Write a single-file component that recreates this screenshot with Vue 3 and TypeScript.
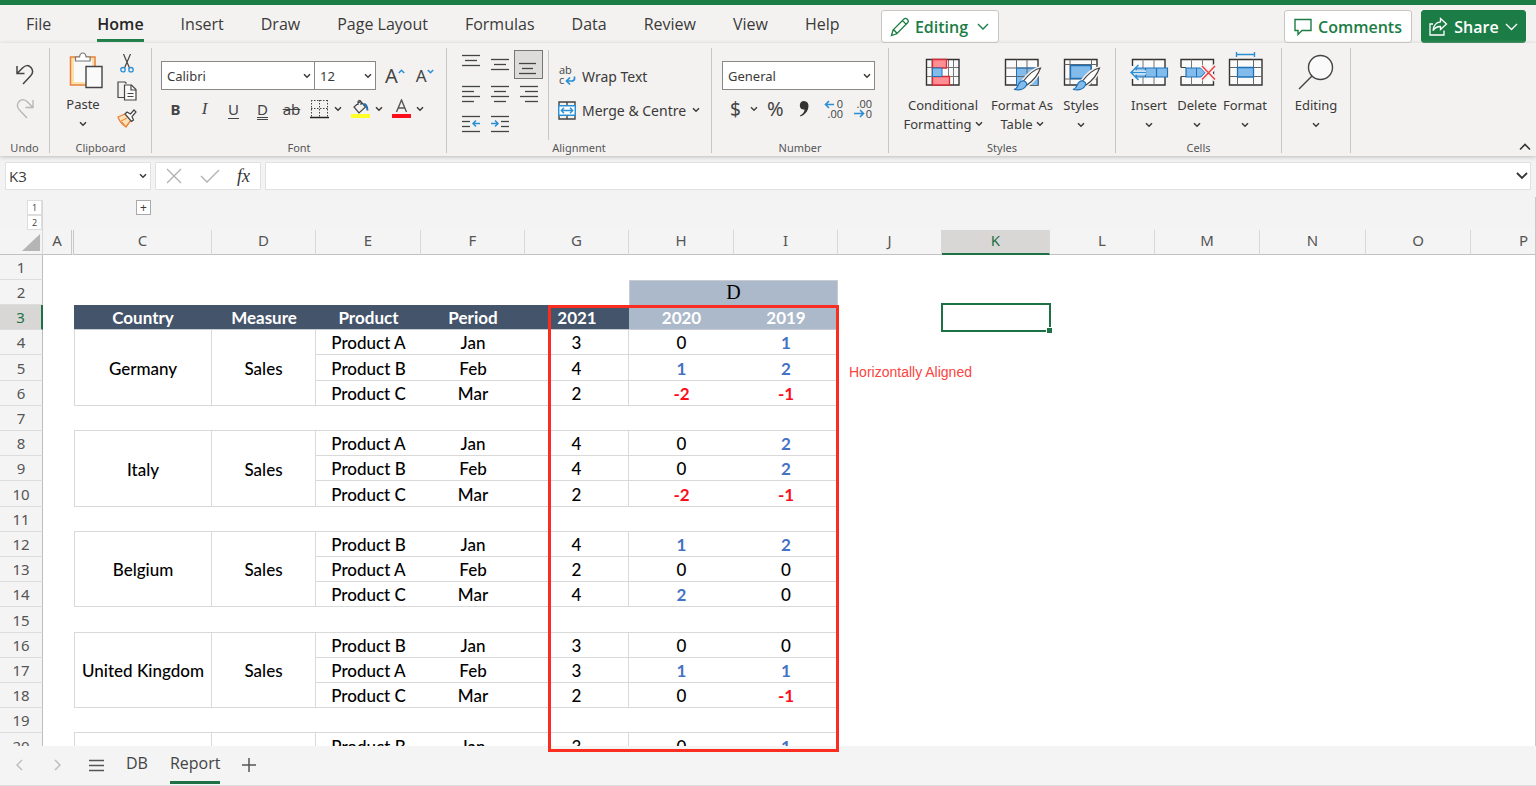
<script setup lang="ts">
import { h, ref } from 'vue'

type Line = [number, number, number]
interface AlignIcon { name: string; lines: Line[]; arrow?: string; active?: boolean }
interface DataRow { product: string; period: string; values: [number, number, number] }
interface Block { country: string; rows: DataRow[] }
interface SheetRow { n: number; kind: 'blank' | 'title' | 'header' | 'data' | 'gap'; first?: boolean; span?: number; country?: string; data?: DataRow }

const Chevron = () =>
  h('svg', { class: 'chev', width: 8, height: 6, viewBox: '0 0 8 6', 'aria-hidden': 'true' }, [
    h('path', { d: 'M1 1.2l3 3 3-3', fill: 'none', stroke: 'currentColor', 'stroke-width': 1.5 }),
  ])

const tabs = ['File', 'Home', 'Insert', 'Draw', 'Page Layout', 'Formulas', 'Data', 'Review', 'View', 'Help']
const activeTab = ref('Home')
const cellName = ref('K3')
const formula = ref('')

const alignIcons: AlignIcon[] = [
  { name: 'Top align', lines: [[6, 24, 5], [9, 21, 10], [6, 24, 15]] },
  { name: 'Middle align', lines: [[6, 24, 9], [9, 21, 14], [6, 24, 19]] },
  { name: 'Bottom align', lines: [[5, 22, 13], [8, 19, 18], [5, 22, 23]], active: true },
  { name: 'Align left', lines: [[6, 24, 7], [6, 18, 12], [6, 24, 17], [6, 18, 22]] },
  { name: 'Centre', lines: [[6, 24, 7], [9, 21, 12], [6, 24, 17], [9, 21, 22]] },
  { name: 'Align right', lines: [[6, 24, 7], [11, 24, 12], [6, 24, 17], [11, 24, 22]] },
  { name: 'Decrease indent', lines: [[6, 24, 7], [6, 14, 12], [6, 14, 17], [6, 24, 22]], arrow: 'M24 14.5h-6.5M20 11.5l-3 3 3 3' },
  { name: 'Increase indent', lines: [[6, 24, 7], [16, 24, 12], [16, 24, 17], [6, 24, 22]], arrow: 'M6 14.5h6.5M10 11.5l3 3-3 3' },
]

const columns = [
  { id: 'A', width: 31 }, { id: 'C', width: 138 }, { id: 'D', width: 104 }, { id: 'E', width: 105 },
  { id: 'F', width: 104 }, { id: 'G', width: 104 }, { id: 'H', width: 105 }, { id: 'I', width: 104 },
  { id: 'J', width: 104 }, { id: 'K', width: 108 }, { id: 'L', width: 105 }, { id: 'M', width: 105 },
  { id: 'N', width: 106 }, { id: 'O', width: 105 }, { id: 'P', width: 106 },
]
const gutter = 43
const tableWidth = gutter + columns.reduce((sum, c) => sum + c.width, 0)
const trailing = ['J', 'K', 'L', 'M', 'N', 'O', 'P']

const row = (product: string, period: string, a: number, b: number, c: number): DataRow => ({ product, period, values: [a, b, c] })
const blocks: Block[] = [
  { country: 'Germany', rows: [row('Product A', 'Jan', 3, 0, 1), row('Product B', 'Feb', 4, 1, 2), row('Product C', 'Mar', 2, -2, -1)] },
  { country: 'Italy', rows: [row('Product A', 'Jan', 4, 0, 2), row('Product B', 'Feb', 4, 0, 2), row('Product C', 'Mar', 2, -2, -1)] },
  { country: 'Belgium', rows: [row('Product B', 'Jan', 4, 1, 2), row('Product A', 'Feb', 2, 0, 0), row('Product C', 'Mar', 4, 2, 0)] },
  { country: 'United Kingdom', rows: [row('Product B', 'Jan', 3, 0, 0), row('Product A', 'Feb', 3, 1, 1), row('Product C', 'Mar', 2, 0, -1)] },
  { country: '', rows: [row('Product B', 'Jan', 3, 0, 1)] },
]

const rows: SheetRow[] = [{ n: 1, kind: 'blank' }, { n: 2, kind: 'title' }, { n: 3, kind: 'header' }]
blocks.forEach((block, b) => {
  if (b > 0) rows.push({ n: rows.length + 1, kind: 'gap' })
  block.rows.forEach((data, i) => {
    rows.push({ n: rows.length + 1, kind: 'data', first: i === 0, span: block.rows.length, country: block.country, data })
  })
})

const tone = (v: number, i: number) => (i === 0 || v === 0 ? '' : v > 0 ? 'up' : 'down')
</script>

<template>
  <div class="app">
    <header class="top">
      <nav class="tabs">
        <button v-for="t in tabs" :key="t" class="tab" :class="{ on: t === activeTab, file: t === 'File' }" @click="activeTab = t">{{ t }}</button>
      </nav>
      <button class="pill mode">
        <svg width="20" height="20" viewBox="0 0 20 20" fill="none" stroke="currentColor" stroke-width="1.3"><path d="M1.5 18.5l1.5-5.5L14 2q1.5-1.5 3.3.3 1.8 1.9.3 3.4L6.8 16.800z M3 13q2.800.6 3.800 3.800 M12.500 3.600l3.700 3.700" /></svg>
        Editing
        <svg width="12" height="8" viewBox="0 0 12 8" fill="none" stroke="currentColor" stroke-width="1.4"><path d="M1 1l5 5 5-5" /></svg>
      </button>
      <button class="pill comments">
        <svg width="18" height="18" viewBox="0 0 18 18" fill="none" stroke="currentColor" stroke-width="1.4"><path d="M1 1.500h16v11H8l-4 4v-4H1z" /></svg>
        Comments
      </button>
      <button class="pill share">
        <svg width="19" height="20" viewBox="0 0 19 20" fill="none" stroke="currentColor" stroke-width="1.3"><path d="M4 7H1v11h14v-4.500 M11.500 1.500l6 5.500-6 5.500V9.500Q7 9.300 4 13.500 5 5.500 11.500 4.800z" /></svg>
        Share
        <svg width="13" height="8" viewBox="0 0 13 8" fill="none" stroke="currentColor" stroke-width="1.4"><path d="M1 1l5.500 5.500L12 1" /></svg>
      </button>
    </header>

    <section class="ribbon">
      <div class="group undo">
        <div class="body stack">
          <button aria-label="Undo"><svg width="20" height="22" viewBox="0 0 20 22" fill="none" stroke="#444" stroke-width="1.500"><path d="M2 2v7.500h7.500 M2.500 9L7.500 4Q12-.5 16 3.500 19.500 8 15.500 12L8 20" /></svg></button>
          <button aria-label="Redo"><svg width="20" height="22" viewBox="0 0 20 22" fill="none" stroke="#b5b5b5" stroke-width="1.300"><path d="M18 2v7.500h-7.500 M17.500 9L12.500 4Q8-.5 4 3.500.5 8 4.500 12L12 20" /></svg></button>
        </div>
        <div class="label">Undo</div>
      </div>

      <div class="group clip">
        <div class="body">
          <button class="big paste">
            <svg width="34" height="37" viewBox="0 0 34 37" fill="none">
              <path d="M1.500 5h24.500v28H1.500z" fill="#fde2b0" stroke="#e8833a" stroke-width="1.500" /><path d="M5 8h18v22H5z" fill="#fafafa" />
              <path d="M6.500 9V5h4q.5-4 3.300-4t3.300 4h4v4z" fill="#fff" stroke="#777" stroke-width="1.200" />
              <path d="M17 14.500h16v21H17z" fill="#fafafa" stroke="#444" stroke-width="1.400" />
            </svg>
            <span>Paste</span><Chevron />
          </button>
          <div class="minis">
            <button aria-label="Cut"><svg width="14" height="19" viewBox="0 0 14 19" fill="none"><path d="M3.500 0l6 14M10.500 0l-6 14" stroke="#444" stroke-width="1.200" /><circle cx="3" cy="15.700" r="2.200" stroke="#2b8fd6" stroke-width="1.300" /><circle cx="11" cy="15.700" r="2.200" stroke="#2b8fd6" stroke-width="1.300" /></svg></button>
            <button aria-label="Copy"><svg width="20" height="20" viewBox="0 0 20 20" stroke="#444" stroke-width="1.200" fill="none"><path d="M7 16.500H1V1h7l1.500 1.500" /><path d="M7.500 4h7l4.500 4.500v10.500H7.500z" fill="#fafafa" /><path d="M14 4v5h5M10.500 12.500h6M10.500 15.500h6" /></svg></button>
            <button aria-label="Format painter"><svg width="20" height="19" viewBox="0 0 20 19" fill="none"><path d="M1 8l7-3 6 6-5 7Q3 14 1 8z" fill="#fbe0b8" stroke="#e8833a" stroke-width="1.300" /><path d="M4 12l6-3M9 18l-4-5" stroke="#e8833a" /><path d="M8 5l2-2 3.500 2L17 1l2 2-4 4.500L16.500 11l-2 1.500z" fill="#fafafa" stroke="#444" stroke-width="1.200" /></svg></button>
          </div>
        </div>
        <div class="label">Clipboard</div>
      </div>

      <div class="group font">
        <div class="body rows">
          <div class="line fonts">
            <span class="pick family"><select aria-label="Font"><option>Calibri</option></select><Chevron /></span>
            <span class="pick size"><select aria-label="Font size"><option>12</option></select><Chevron /></span>
            <button class="grow" aria-label="Increase font size">A<svg width="7" height="5" viewBox="0 0 7 5" fill="none" stroke="#2b8fd6" stroke-width="1.500"><path d="M.8 4l2.700-2.700L6.200 4" /></svg></button>
            <button class="grow less" aria-label="Decrease font size">A<svg width="7" height="5" viewBox="0 0 7 5" fill="none" stroke="#2b8fd6" stroke-width="1.500"><path d="M.8 1l2.700 2.700L6.200 1" /></svg></button>
          </div>
          <div class="line styles">
            <button class="ch b">B</button><button class="ch i">I</button><button class="ch u">U</button><button class="ch d">D</button><button class="ch s">ab</button>
            <button class="duo" aria-label="Borders"><svg width="19" height="20" viewBox="0 0 19 20" fill="none" stroke="#444"><path d="M1 1.500h17M1 9.500h17M1.500 1v17M9.500 1v17M17.500 1v17" stroke-dasharray="1.500 1.500" /><path d="M0 18.500h19" stroke="#222" stroke-width="1.500" /></svg><Chevron /></button>
            <button class="duo" aria-label="Fill colour"><svg width="19" height="20" viewBox="0 0 19 20" fill="none"><path d="M9.500 2L3 8l5 6 6.500-6zM7 6V2.500Q8.500 0 10 2.500V6" stroke="#444" stroke-width="1.200" /><path d="M12 5.500q4-1.500 4.500 6" stroke="#1f6fb2" stroke-width="2" /><path d="M0 15h19v4H0z" fill="#ffff29" /></svg><Chevron /></button>
            <button class="duo" aria-label="Font colour"><svg width="19" height="20" viewBox="0 0 19 20" fill="none"><path d="M4.500 13L9.500 1l5 12M6 9h7" stroke="#555" stroke-width="1.400" /><path d="M0 15h19v4H0z" fill="#fb0d1b" /></svg><Chevron /></button>
          </div>
        </div>
        <div class="label">Font</div>
      </div>

      <div class="group alignment">
        <div class="body">
          <div class="aligns">
            <button v-for="a in alignIcons" :key="a.name" class="al" :class="{ active: a.active }" :aria-label="a.name">
              <svg width="29" height="29" viewBox="0 0 29 29" fill="none"><path v-for="(l, i) in a.lines" :key="i" :d="`M${l[0]} ${l[2] + 0.5}H${l[1]}`" stroke="#444" stroke-width="1.300" /><path v-if="a.arrow" :d="a.arrow" stroke="#2b8fd6" stroke-width="1.500" /></svg>
            </button>
          </div>
          <div class="wraps">
            <button><svg width="18" height="26" viewBox="0 0 18 26"><text x="1" y="11" class="ic">ab</text><text x="1" y="21" class="ic">c</text><path d="M16.500 13.500v2q0 2.500-3 2.500H9M12 14.500L8.500 18l3.500 3.500" fill="none" stroke="#2b8fd6" stroke-width="1.700" /></svg>Wrap Text</button>
            <button><svg width="18" height="19" viewBox="0 0 18 19" fill="none"><path d="M1 1h16v17H1zM9 1v3.500M9 14.500V18" stroke="#444" stroke-width="1.400" /><path d="M.7 4.700h16.600v9.600H.7z" fill="#fff" stroke="#2b8fd6" stroke-width="1.500" /><path d="M3.500 9.500h11M6 6.800L3.300 9.500 6 12.200M12 6.800l2.700 2.700L12 12.200" stroke="#2b8fd6" stroke-width="1.400" /></svg>Merge &amp; Centre<Chevron /></button>
          </div>
        </div>
        <div class="label">Alignment</div>
      </div>

      <div class="group number">
        <div class="body rows">
          <div class="line"><span class="pick format"><select aria-label="Number format"><option>General</option></select><Chevron /></span></div>
          <div class="line nums">
            <button class="cur">$<Chevron /></button><button>%</button>
            <button class="comma" aria-label="Comma style"><svg width="10" height="18" viewBox="0 0 10 18"><path d="M5 1q4.500.3 4.500 5Q9.500 13 1.500 16.500l-.5-1Q5.500 13 5.500 9.500 1 10 .8 5.500 1 1.200 5 1z" fill="#333" /></svg></button>
            <button aria-label="Increase decimal"><svg width="20" height="26" viewBox="0 0 20 26"><text x="19" y="12" text-anchor="end" class="dec">0</text><text x="19" y="22" text-anchor="end" class="dec">.00</text><path d="M10 8.500H1.500M5 5L1.500 8.500 5 12" fill="none" stroke="#2b8fd6" stroke-width="1.600" /></svg></button>
            <button aria-label="Decrease decimal"><svg width="20" height="26" viewBox="0 0 20 26"><text x="19" y="12" text-anchor="end" class="dec">.00</text><text x="19" y="22" text-anchor="end" class="dec">0</text><path d="M1 17.500h9.500M7 14l3.500 3.500L7 21" fill="none" stroke="#2b8fd6" stroke-width="1.600" /></svg></button>
          </div>
        </div>
        <div class="label">Number</div>
      </div>

      <div class="group style">
        <div class="body">
          <button class="big cf">
            <svg width="36" height="38" viewBox="0 0 36 38" fill="none"><path d="M1.500 7.500h32.500v25.500h-32.500z" fill="#fafafa" /><path d="M1 15.500h33M1 24.500h33M7 7.500V33M28.500 7.500V33M23.500 7.500V33" stroke="#777" /><path d="M1.500 7.500h32.500V33H1.500z" stroke="#333" stroke-width="1.400" /><path d="M7.500 7.500h14v8.500h-14zM7.500 24.500h17V33h-17z" fill="#ff8f94" stroke="#d92b33" stroke-width="1.300" /><path d="M7.500 16h9.500v8.500H7.500z" fill="#83bbea" stroke="#1f72b8" /></svg>
            <span>Conditional<br>Formatting<Chevron /></span>
          </button>
          <button class="big fat">
            <svg width="36" height="38" viewBox="0 0 36 38" fill="none"><path d="M1.500 7.500h32.500V33H1.500z" fill="#fafafa" stroke="#333" stroke-width="1.400" /><path d="M12.500 16H34v17H12.500z" fill="#83bbea" /><path d="M1.500 16H34M1.500 24.500H34M12.500 7.500V33M23 7.500V33" stroke="#666" /><path d="M12.500 33V16H34v17" stroke="#1f72b8" /><path d="M19.500 29Q28 18 36.500 16 33 26 23 33z" fill="#fff" stroke="#f3f2f1" stroke-width="4" /><path d="M19.500 29Q28 18 36.500 16 33 26 23 33z" fill="#fff" stroke="#444" stroke-width="1.200" /><path d="M10 37.500q3-1 4-4 2-5 6-4.500 4 1.500 2 5-3 5-12 3.500z" fill="#83bbea" stroke="#1f72b8" stroke-width="1.200" /></svg>
            <span>Format As<br>Table<Chevron /></span>
          </button>
          <button class="big st">
            <svg width="36" height="38" viewBox="0 0 36 38" fill="none"><path d="M1.500 7.500h32.500V33H1.500z" fill="#fafafa" stroke="#333" stroke-width="1.400" /><path d="M1.500 12.500H34M1.500 27H34M7 7.500V33M28.500 7.500V33" stroke="#666" /><path d="M7.500 13.500h20.500v13H7.500z" fill="#83bbea" stroke="#1f72b8" stroke-width="1.300" /><path d="M19.500 29Q28 18 36.500 16 33 26 23 33z" fill="#fff" stroke="#f3f2f1" stroke-width="4" /><path d="M19.500 29Q28 18 36.500 16 33 26 23 33z" fill="#fff" stroke="#444" stroke-width="1.200" /><path d="M10 37.500q3-1 4-4 2-5 6-4.500 4 1.500 2 5-3 5-12 3.500z" fill="#83bbea" stroke="#1f72b8" stroke-width="1.200" /></svg>
            <span>Styles</span><Chevron />
          </button>
        </div>
        <div class="label">Styles</div>
      </div>

      <div class="group cells">
        <div class="body">
          <button class="big">
            <svg width="39" height="38" viewBox="0 0 39 38" fill="none"><path d="M2.500 7.500H35V33H2.500z" fill="#fafafa" stroke="#333" stroke-width="1.400" /><path d="M13 7.500V33M24 7.500V33" stroke="#777" /><path d="M0 14h6v13H0z" fill="#f3f2f1" /><path d="M6 16h31.500v9H6z" fill="#83bbea" stroke="#1f72b8" stroke-width="1.200" /><path d="M15.500 16v9M26.500 16v9" stroke="#1f72b8" stroke-width="1.200" /><path d="M16 20.500H1.500" stroke="#fff" stroke-width="4" /><path d="M16 20.500H1.500M8.500 13l-7.500 7.500L8.500 28" stroke="#2b8fd6" stroke-width="1.500" /></svg>
            <span>Insert</span><Chevron />
          </button>
          <button class="big">
            <svg width="37" height="38" viewBox="0 0 37 38" fill="none"><path d="M2 7.500h32.500V33H2z" fill="#fafafa" stroke="#333" stroke-width="1.400" /><path d="M12.500 7.500V33M23.500 7.500V33" stroke="#777" /><path d="M0 15.500h6v9H0z" fill="#f3f2f1" /><path d="M2 15.500h5M2 24.500h5" stroke="#444" /><path d="M7 16h15l4.500 4.500L22 25H7z" fill="#83bbea" stroke="#1f72b8" stroke-width="1.200" /><path d="M17.500 16v9" stroke="#1f72b8" /><path d="M23 13.500L37 28M37 13.500L23 28" stroke="#f3f2f1" stroke-width="5" /><path d="M23 14l13 13.500M36 14L23 27.500" stroke="#ee3f46" stroke-width="1.500" /></svg>
            <span>Delete</span><Chevron />
          </button>
          <button class="big">
            <svg width="35" height="38" viewBox="0 0 35 38" fill="none"><path d="M1.500 7.500H34V33H1.500z" fill="#fafafa" stroke="#333" stroke-width="1.400" /><path d="M1.500 15.500H34M1.500 24.500H34M9.500 7.500V33M25.500 7.500V33" stroke="#666" /><path d="M9.500 15.500h16v9.500h-16z" fill="#83bbea" stroke="#1f72b8" stroke-width="1.300" /><path d="M8.500 2.500h18M8.500 0v5M26.500 0v5" stroke="#2b8fd6" stroke-width="1.400" /></svg>
            <span>Format</span><Chevron />
          </button>
        </div>
        <div class="label">Cells</div>
      </div>

      <div class="group edit">
        <div class="body">
          <button class="big">
            <svg width="36" height="38" viewBox="0 0 36 38" fill="none" stroke="#444" stroke-width="1.400"><circle cx="22.500" cy="15.500" r="12" fill="#fafafa" /><path d="M14 24L1 37" /></svg>
            <span>Editing</span><Chevron />
          </button>
        </div>
      </div>
      <button class="collapse" aria-label="Collapse ribbon"><svg width="12" height="8" viewBox="0 0 12 8" fill="none" stroke="#333" stroke-width="1.600"><path d="M1 6.500l5-5 5 5" /></svg></button>
    </section>

    <section class="bar">
      <span class="pick name"><input v-model="cellName" aria-label="Name box"><Chevron /></span>
      <div class="fx">
        <button aria-label="Cancel"><svg width="16" height="16" viewBox="0 0 16 16" stroke="#b0b0b0" stroke-width="1.300"><path d="M1 1l14 14M15 1L1 15" /></svg></button>
        <button aria-label="Enter"><svg width="20" height="14" viewBox="0 0 20 14" fill="none" stroke="#b0b0b0" stroke-width="1.300"><path d="M1 7l6 6L19 1" /></svg></button>
        <button class="fn">fx</button>
      </div>
      <span class="formula"><input v-model="formula" aria-label="Formula"><svg width="12" height="8" viewBox="0 0 12 8" fill="none" stroke="#333" stroke-width="1.800"><path d="M1 1l5 5 5-5" /></svg></span>
    </section>

    <main class="sheet">
      <div class="view">
        <div class="outline">
          <div class="levels"><button>1</button><button>2</button></div>
          <button class="plus">+</button>
        </div>
        <table class="grid" :style="{ width: tableWidth + 'px' }">
          <colgroup>
            <col :style="{ width: gutter + 'px' }">
            <col v-for="c in columns" :key="c.id" :style="{ width: c.width + 'px' }">
          </colgroup>
          <thead>
            <tr>
              <th class="corner"><svg width="18" height="17" viewBox="0 0 18 17"><path d="M18 0v17H0z" fill="#b5b5b5" /></svg></th>
              <th v-for="c in columns" :key="c.id" :class="{ sel: c.id === 'K', hid: c.id === 'A' }">{{ c.id }}</th>
            </tr>
          </thead>
          <tbody>
            <tr v-for="r in rows" :key="r.n" :class="r.kind">
              <th :class="{ sel: r.n === 3 }">{{ r.n }}</th>
              <td></td>
              <template v-if="r.kind === 'data' && r.data">
                <td v-if="r.first" class="ln lf rt" :rowspan="r.span">{{ r.country }}</td>
                <td v-if="r.first" class="ln rt" :rowspan="r.span">{{ r.country ? 'Sales' : '' }}</td>
                <td class="ln">{{ r.data.product }}</td>
                <td class="ln">{{ r.data.period }}</td>
                <td v-for="(v, i) in r.data.values" :key="i" class="ln" :class="[tone(v, i), { rt: i === 0 }]">{{ v }}</td>
              </template>
              <template v-else-if="r.kind === 'header'">
                <td class="hd">Country</td><td class="hd">Measure</td><td class="hd">Product</td><td class="hd">Period</td><td class="hd">2021</td><td class="hd lt">2020</td><td class="hd lt">2019</td>
              </template>
              <template v-else-if="r.kind === 'title'"><td colspan="5"></td><td colspan="2" class="dim">D</td></template>
              <td v-else colspan="7" :class="{ ln: r.kind === 'gap' }"></td>
              <td v-for="c in trailing" :key="c" :class="{ cursor: r.n === 3 && c === 'K' }"></td>
            </tr>
          </tbody>
        </table>
      </div>
      <div class="frame"></div>
      <div class="note">Horizontally Aligned</div>
    </main>

    <footer class="foot">
      <button aria-label="Previous sheet" class="prev"><svg width="8" height="12" viewBox="0 0 8 12" fill="none" stroke="#bbb" stroke-width="1.400"><path d="M7 1L2 6l5 5" /></svg></button>
      <button aria-label="Next sheet" class="next"><svg width="8" height="12" viewBox="0 0 8 12" fill="none" stroke="#bbb" stroke-width="1.400"><path d="M1 1l5 5-5 5" /></svg></button>
      <button aria-label="All sheets" class="all"><svg width="15" height="13" viewBox="0 0 15 13" stroke="#555" stroke-width="1.300"><path d="M0 1.500h15M0 6.500h15M0 11.500h15" /></svg></button>
      <button class="sh">DB</button>
      <button class="sh on">Report</button>
      <button aria-label="New sheet" class="add"><svg width="14" height="14" viewBox="0 0 14 14" stroke="#555" stroke-width="1.500"><path d="M0 7h14M7 0v14" /></svg></button>
    </footer>
  </div>
</template>

<style>
body { margin: 0; }
</style>

<style scoped>
.app { height: 100vh; display: flex; flex-direction: column; overflow: hidden; background: #f3f3f3; color: #3b3a39; font-family: "Open Sans", "Noto Sans", sans-serif; font-size: 13px; }
.app * { box-sizing: border-box; }
button { border: 0; padding: 0; background: none; color: inherit; font: inherit; display: flex; align-items: center; justify-content: center; }
svg { display: block; flex: none; }

.top { flex: none; height: 43px; border-top: 5px solid #1b7d45; background: #f3f2f1; display: flex; align-items: flex-start; padding-right: 10px; }
.tabs { display: flex; gap: 37px; padding-left: 26px; margin-right: 41px; }
.tab { height: 37px; padding-top: 4px; font-size: 16px; border-bottom: 3px solid transparent; white-space: nowrap; }
.tab.file { margin-right: 9px; }
.tab.on { font-weight: 600; color: #262626; border-bottom-color: #1b7d45; }
.pill { height: 33px; margin-top: 5px; border: 1px solid #c8c6c4; border-radius: 3px; background: #fff; color: #1b7d45; font-size: 16px; font-weight: 600; }
.mode { width: 118px; gap: 5px; }
.mode svg:last-child { margin-left: 4px; }
.comments { width: 128px; gap: 6px; margin-left: auto; }
.share { width: 105px; gap: 6px; margin-left: 9px; background: #1b7d45; border-color: #1b7d45; color: #fff; }

.ribbon { flex: none; height: 113px; background: #f3f2f1; display: flex; padding: 5px 5px 3px 0; box-shadow: 0 1px 4px #bbb; z-index: 1; font-family: "Noto Sans", "Open Sans", sans-serif; }
.group { flex: none; border-right: 1px solid #c8c6c4; display: flex; flex-direction: column; }
.body { flex: 1; display: flex; min-height: 0; }
.label { height: 12px; line-height: 14px; font-size: 11px; text-align: center; color: #555; }
.undo { width: 50px; }
.stack { flex-direction: column; align-items: center; gap: 12px; padding-top: 16px; }
.clip { width: 102px; }
.font { width: 295px; }
.alignment { width: 265px; }
.number { width: 177px; }
.style { width: 227px; }
.cells { width: 166px; }
.edit { width: 69px; }
.big { flex-direction: column; justify-content: flex-start; font-size: 13px; line-height: 19px; text-align: center; }
.big > span { margin-top: 6px; white-space: nowrap; }
.big > .chev { margin-top: 7px; }
.big span .chev { display: inline-block; margin-left: 3px; vertical-align: 2px; }
.style .body, .cells .body, .edit .body { padding-top: 4px; }
.style .body { padding-left: 11px; }
.cf { width: 86px; }
.fat { width: 72px; }
.st { width: 46px; }
.fat svg, .st svg { overflow: visible; }
.cells .body { padding-left: 9px; }
.cells .big { width: 48px; }
.edit .body { justify-content: center; }
.paste { width: 36px; margin: 4px 0 0 15px; }
.paste svg:first-child { margin-left: 6px; }
.minis { width: 52px; display: flex; flex-direction: column; align-items: center; gap: 8px; padding: 6px 0 0 2px; }

.rows { flex-direction: column; padding: 13px 0 0 9px; gap: 4px; }
.line { display: flex; height: 29px; align-items: center; }
.pick { display: grid; align-items: center; height: 29px; background: #fff; border: 1px solid #8a8886; }
.pick > * { grid-area: 1 / 1; }
.pick .chev { justify-self: end; margin-right: 3px; pointer-events: none; }
.pick select, .pick input { appearance: none; border: 0; outline: 0; background: none; width: 100%; height: 27px; padding: 0 5px; font: inherit; font-size: 13px; color: #3b3a39; }
.family { width: 154px; }
.size { width: 62px; margin-left: -1px; }
.format { width: 153px; margin-left: 1px; }
.grow { font-size: 20px; color: #444; margin-left: 9px; line-height: 24px; align-items: flex-start; }
.grow svg { margin-top: 5px; }
.grow.less { font-size: 17px; margin-left: 11px; }
.ch { width: 29px; height: 26px; font-size: 15px; color: #444; }
.b { font-weight: 700; }
.i { font-style: italic; font-family: "Liberation Serif", serif; font-size: 17px; }
.u { text-decoration: underline; text-underline-offset: 3px; }
.d { text-decoration: underline double; text-underline-offset: 2px; }
.s { text-decoration: line-through; margin-right: 4px; }
.duo { width: 41px; gap: 5px; justify-content: flex-start; }

.aligns { width: 102px; height: 90px; margin-top: 2px; padding-left: 9px; display: grid; grid-template-columns: repeat(3, 29px); grid-template-rows: 29px 30px 30px; align-items: start; border-right: 1px solid #c8c6c4; }
.al { width: 29px; height: 29px; }
.al.active { background: #dddcdb; border: 1px solid #767676; overflow: hidden; }
.wraps { display: flex; flex-direction: column; align-items: flex-start; gap: 8px; padding: 15px 0 0 9px; font-size: 14px; }
.wraps button { height: 26px; gap: 6px; white-space: nowrap; }
.ic, .dec { font: 11px "Open Sans", sans-serif; fill: #444; }
.nums { padding-left: 9px; gap: 9px; }
.nums button { font-size: 20px; color: #444; }
.nums .cur { gap: 9px; font-size: 19px; }
.comma { padding: 0 6px; }
.collapse { margin-left: auto; align-self: flex-end; height: 12px; }

.bar { flex: none; height: 41px; padding: 6px 5px 6px; display: flex; gap: 4px; align-items: flex-start; }
.bar .name, .fx, .formula { height: 28px; border: 1px solid #e1e1e1; background: #fff; }
.name { width: 146px; }
.bar .name input { height: 26px; padding: 0 3px; font-size: 15px; }
.fx { width: 106px; display: flex; align-items: center; justify-content: space-between; padding: 0 10px; }
.fn { font: italic 18px "Liberation Serif", serif; color: #333; }
.formula { flex: 1; display: flex; align-items: center; padding-right: 2px; }
.formula input { flex: 1; border: 0; outline: 0; background: none; font-size: 15px; }

.sheet { flex: 1; min-height: 0; position: relative; }
.view { height: 100%; overflow: hidden; border-right: 1px solid #c8c8c8; }
.outline { height: 33px; padding-top: 3px; display: flex; align-items: flex-start; }
.levels { width: 43px; padding-left: 27px; border-right: 1px solid #d8d8d8; height: 30px; }
.levels button { width: 15px; height: 15px; border: 1px solid #ddd; background: #fff; font-size: 9px; }
.plus { width: 15px; height: 15px; margin-left: 93px; border: 1px solid #aaa; background: #fff; font-size: 12px; line-height: 12px; }

.grid { table-layout: fixed; border-collapse: separate; border-spacing: 0; background: #fff; font-family: Lato, "Open Sans", sans-serif; font-size: 17px; font-weight: 500; color: #000; }
.grid td, .grid th { height: 25px; padding: 0; line-height: 24px; text-align: center; white-space: nowrap; }
.grid td { padding-top: 2px; line-height: 22px; }
.grid tbody tr:nth-child(5n) th { height: 26px; }
.grid th { font-family: "Noto Sans", "Open Sans", sans-serif; font-size: 15px; font-weight: 400; color: #555; background: #f4f4f4; }
.grid thead th { border-bottom: 1px solid #c2c2c2; border-right: 1px solid #d8d8d8; line-height: 21px; vertical-align: top; }
.grid thead .hid { border-right: 3px double #c8c8c8; }
.grid .corner svg { margin: 4px 0 0 22px; }
.grid tbody th { border-right: 1px solid #bdbdbd; border-bottom: 1px solid #ddd; }
.grid thead th.sel { background: #d8d7d5; color: #1e7145; border-bottom: 2px solid #1e7145; }
.grid tbody th.sel { background: #d8d7d5; color: #1e7145; border-right: 2px solid #1e7145; }
.ln { border-bottom: 1px solid #d9d9d9; }
.lf { border-left: 1px solid #d9d9d9; }
.rt { border-right: 1px solid #d9d9d9; }
.up, .down { font-weight: 700; color: #4472c4; }
.down { color: #fc0d1b; }
.hd { background: #44546a; color: #fff; font-weight: 700; border-bottom: 1px solid #c8ccd2; }
.lt, .dim { background: #acb9ca; }
.grid .dim { padding: 0; font-family: "Liberation Serif", serif; font-size: 20px; border: 1px solid #c9cdd3; border-bottom: 0; line-height: 22px; vertical-align: top; }
.cursor { position: relative; }
.cursor::before { content: ""; position: absolute; inset: -2px -1px -2px -1px; border: 2px solid #1e7145; }
.cursor::after { content: ""; position: absolute; right: -2px; bottom: -3px; width: 5px; height: 5px; background: #1e7145; border: solid #fff; border-width: 1px 0 0 1px; }
.frame { position: absolute; left: 548px; top: 108px; width: 291px; bottom: -6px; border: 3px solid #fb2c20; z-index: 2; }
.note { position: absolute; left: 849px; top: 166px; font: 14px/18px "Liberation Sans", Arial, sans-serif; color: #f9453f; }

.foot { flex: none; height: 40px; background: #f4f4f4; border-bottom: 1px solid #dcdcdc; display: flex; align-items: flex-start; padding-left: 15px; }
.foot button { height: 38px; }
.next { margin-left: 31px; }
.all { margin-left: 27px; }
.sh { font-size: 16px; color: #444; border-bottom: 3px solid transparent; margin-left: 22px; }
.foot .sh { padding-bottom: 2px; }
.sh.on { border-bottom-color: #1e7145; font-weight: 500; }
.add { margin-left: 22px; }
</style>
